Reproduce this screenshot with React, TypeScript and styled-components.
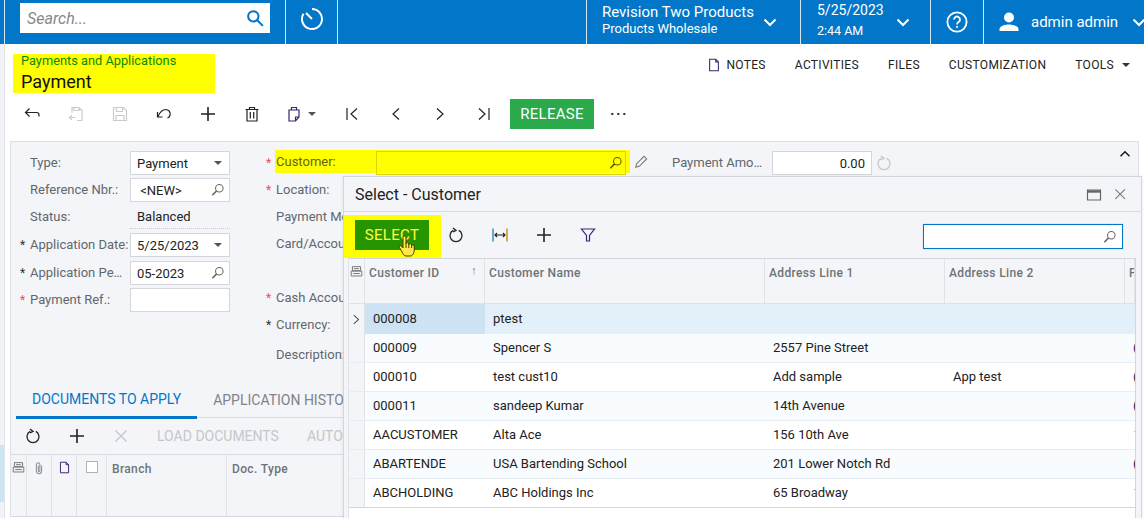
import React from 'react';
import styled, { createGlobalStyle } from 'styled-components';

const GlobalStyle = createGlobalStyle`
  html, body {
    margin: 0;
    padding: 0;
    background: #fff;
    font-family: Roboto, "Liberation Sans", sans-serif;
    font-size: 13px;
    color: #222;
  }
  * { box-sizing: border-box; }
`;

const BLUE = '#0277c9';
const YELLOW = '#ffff00';

const Page = styled.div`
  position: relative;
  width: 1144px;
  height: 518px;
  overflow: hidden;
  background: #fff;
`;

/* top bar */
const TopBar = styled.header`
  display: flex;
  height: 44px;
  background: ${BLUE};
  color: #fff;
`;

const TopCell = styled.div<{ $w?: number; $pl?: number; $last?: boolean }>`
  display: flex;
  align-items: center;
  flex: ${(p) => (p.$w ? `0 0 ${p.$w}px` : '1 1 auto')};
  min-width: 0;
  padding-left: ${(p) => p.$pl ?? 0}px;
  border-right: ${(p) => (p.$last ? 'none' : '1px solid #d7e8f5')};
`;

const SearchBox = styled.div`
  display: flex;
  align-items: center;
  justify-content: space-between;
  align-self: flex-start;
  width: 250px;
  height: 30px;
  margin-top: 3px;
  padding: 0 6px 0 7px;
  background: #fff;
  color: #85888c;
  font-size: 16px;
  font-style: italic;
`;

const ClockBox = styled.span`
  display: flex;
  margin-top: -6px;
`;

const TwoLines = styled.div<{ $w: number; $up: number }>`
  flex: 0 0 ${(p) => p.$w}px;
  margin-top: -${(p) => p.$up}px;
  white-space: nowrap;
`;

const MainLine = styled.div<{ $size: number }>`
  font-size: ${(p) => p.$size}px;
  line-height: 17px;
`;

const SubLine = styled.div<{ $gap: number; $size: number }>`
  margin-top: ${(p) => p.$gap}px;
  font-size: ${(p) => p.$size}px;
  line-height: 15px;
`;

const UserName = styled.span`
  margin: 0 13px 0 11px;
  font-size: 15px;
  white-space: nowrap;
`;

/* body */
const Body = styled.div`
  display: flex;
  height: 474px;
`;

const Rail = styled.div`
  flex: 0 0 5px;
  padding-top: 401px;
  background: #f1f3f6;
  border-right: 1px solid #dfe2e6;
`;

const RailMark = styled.div`
  width: 4px;
  height: 57px;
  background: #cde4f5;
`;

const Main = styled.main`
  flex: 1;
  display: flex;
  flex-direction: column;
  min-width: 0;
`;

const HeadRow = styled.div`
  display: flex;
  justify-content: space-between;
  height: 55px;
  padding: 10px 14px 0 8px;
`;

const TitleBlock = styled.div`
  width: 202px;
  height: 39px;
  padding: 0 8px;
  background: ${YELLOW};
`;

const Crumb = styled.div`
  font-size: 12.8px;
  line-height: 14px;
  color: #0a8a00;
`;

const PageTitle = styled.div`
  margin-top: 3px;
  font-size: 18px;
  line-height: 22px;
  color: #111;
`;

const LinkBar = styled.nav`
  display: flex;
  align-items: flex-start;
  gap: 29px;
  margin-top: 1px;
`;

const TopLink = styled.span`
  display: inline-flex;
  align-items: center;
  gap: 5px;
  font-size: 12px;
  line-height: 20px;
  letter-spacing: 0.32px;
  color: #222;
`;

const ToolBar = styled.div`
  display: flex;
  align-items: center;
  height: 30px;
  margin-left: 5px;
`;

const ToolBtn = styled.span<{ $w?: number }>`
  display: inline-flex;
  align-items: center;
  justify-content: center;
  gap: 6px;
  width: ${(p) => p.$w ?? 44}px;
  height: 30px;
`;

const ReleaseBtn = styled.span`
  display: inline-flex;
  align-items: center;
  justify-content: center;
  width: 84px;
  height: 30px;
  margin-left: 4px;
  background: #2aaa4a;
  color: #fff;
  font-size: 15px;
  letter-spacing: 0.3px;
`;

const Dots = styled.span`
  margin-left: 16px;
  font-size: 15px;
  line-height: 28px;
  letter-spacing: 1.5px;
  font-weight: 700;
  color: #333;
`;

/* form */
const Panel = styled.section`
  flex: 0 0 376px;
  display: flex;
  flex-direction: column;
  margin: 12px 5px 0 5px;
  background: #f4f5f8;
  border: 1px solid #dcdfe3;
  border-bottom: 1px solid #d5d8dc;
`;

const Form = styled.div`
  position: relative;
  display: flex;
  height: 239px;
  padding: 8px 0 0 9px;
`;

const FormCol = styled.div<{ $w: number }>`
  flex: 0 0 ${(p) => p.$w}px;
`;

const FormRow = styled.div<{ $h?: number }>`
  display: flex;
  align-items: flex-start;
  height: ${(p) => p.$h ?? 27}px;
`;

const Star = styled.span<{ $red?: boolean }>`
  flex: 0 0 10px;
  font-size: 12px;
  line-height: 26px;
  color: ${(p) => (p.$red ? '#e8505b' : '#333')};
`;

const Label = styled.span<{ $w?: number }>`
  flex: 0 0 ${(p) => p.$w ?? 100}px;
  margin-right: ${(p) => 100 - (p.$w ?? 100)}px;
  overflow: hidden;
  white-space: nowrap;
  text-overflow: ellipsis;
  line-height: 25px;
  color: #5f676e;
`;

const Field = styled.div<{ $w?: number; $right?: boolean }>`
  display: flex;
  align-items: center;
  justify-content: ${(p) => (p.$right ? 'flex-end' : 'space-between')};
  width: ${(p) => p.$w ?? 100}px;
  height: 24px;
  margin-top: 1px;
  padding: 0 ${(p) => (p.$right ? 6 : 4)}px 0 6px;
  background: #fff;
  border: 1px solid #d3d6da;
  color: #222;
`;

const Caret = styled.span`
  width: 0;
  height: 0;
  margin-right: 3px;
  border-left: 4px solid transparent;
  border-right: 4px solid transparent;
  border-top: 4px solid #555;
`;

const LinkCaret = styled(Caret)`
  margin-left: 3px;
  margin-right: 0;
  border-top-color: #333;
`;

const StatusText = styled.div`
  width: 100px;
  height: 24px;
  margin-top: 1px;
  padding-left: 7px;
  line-height: 23px;
  border-bottom: 1px dotted #ccc;
  color: #222;
`;

const Highlight = styled.div`
  display: flex;
  align-items: flex-start;
  flex: 0 0 355px;
  width: 355px;
  height: 23px;
  margin-left: -1px;
  padding-left: 1px;
  background: ${YELLOW};
  margin-right: 4px;
`;

const CustomerField = styled(Field)`
  background: transparent;
  border-color: #d6d600;
  justify-content: flex-end;
  padding: 0 2px;
  width: 250px;
`;

const HighlightLabel = styled(Label)`
  color: #66660a;
  line-height: 24px;
`;

const SideIcon = styled.span<{ $ml?: number }>`
  display: inline-flex;
  margin-top: 5px;
  margin-left: ${(p) => p.$ml ?? 0}px;
`;

const Collapse = styled.span`
  position: absolute;
  top: 6px;
  right: 7px;
`;

const TabStrip = styled.div`
  display: flex;
  height: 37px;
  margin-left: 5px;
  border-bottom: 1px solid #d8dbdf;
`;

const Tab = styled.span<{ $active?: boolean }>`
  display: flex;
  align-items: center;
  height: ${(p) => (p.$active ? 38 : 37)}px;
  padding: 0 16px;
  font-size: 14px;
  color: ${(p) => (p.$active ? BLUE : '#7d848a')};
  border-bottom: ${(p) => (p.$active ? `3px solid ${BLUE}` : 'none')};
  white-space: nowrap;
`;

const GridTools = styled.div`
  display: flex;
  align-items: center;
  height: 37px;
  border-bottom: 1px solid #d8dbdf;
  white-space: nowrap;
  overflow: hidden;
`;

const GhostAction = styled.span<{ $ml?: number }>`
  margin-left: ${(p) => p.$ml ?? 0}px;
  font-size: 14px;
  color: #c3c7cb;
`;

const DocHead = styled.div`
  flex: 1;
  display: grid;
  grid-template-columns: 16px 25px 25px 30px 120px 1fr;
`;

const HeadCell = styled.div<{ $center?: boolean }>`
  display: flex;
  justify-content: ${(p) => (p.$center ? 'center' : 'flex-start')};
  padding: ${(p) => (p.$center ? '6px 0 0' : '6px 5px 0')};
  overflow: hidden;
  white-space: nowrap;
  border-right: 1px solid #e0e3e6;
  font-size: 12px;
  line-height: 16px;
  font-weight: 500;
  letter-spacing: 0.35px;
  color: #6c7479;
`;

const CheckBox = styled.span`
  width: 12px;
  height: 12px;
  background: #fff;
  border: 1px solid #aeb3b8;
`;

/* dialog */
const Dialog = styled.div`
  position: absolute;
  left: 343px;
  top: 176px;
  width: 799px;
  height: 360px;
  background: #f4f5f8;
  border: 1px solid #d3d6da;
  box-shadow: 0 1px 4px rgba(0, 0, 0, 0.08);
`;

const DialogHead = styled.div`
  display: flex;
  align-items: center;
  justify-content: space-between;
  height: 35px;
  padding: 1px 13px 0 11px;
  border-bottom: 1px solid #d8dbdf;
  font-size: 16px;
  color: #222;
`;

const HeadIcons = styled.div`
  display: flex;
  align-items: center;
  gap: 12px;
`;

const DialogTools = styled.div`
  display: flex;
  align-items: flex-start;
  height: 46px;
`;

const SelectHighlight = styled.div`
  flex: 0 0 97px;
  height: 43px;
  margin-top: 3px;
  padding: 5px 0 0 11px;
  background: ${YELLOW};
`;

const SelectBtn = styled.div`
  position: relative;
  display: flex;
  align-items: center;
  justify-content: center;
  width: 74px;
  height: 30px;
  background: #279500;
  color: #ffff3c;
  font-size: 15px;
  letter-spacing: 0.3px;
`;

const Cursor = styled.span`
  position: absolute;
  left: 43px;
  top: 15px;
  display: flex;
`;

const DialogBtn = styled.span`
  display: flex;
  align-items: center;
  justify-content: center;
  width: 44px;
  height: 30px;
  margin-top: 8px;
`;

const FirstDialogBtn = styled(DialogBtn)`
  margin-left: -7px;
`;

const DialogSearch = styled.div`
  display: flex;
  align-items: center;
  justify-content: flex-end;
  width: 200px;
  height: 25px;
  margin: 12px 18px 0 auto;
  padding-right: 5px;
  background: #fff;
  border: 1px solid ${BLUE};
  box-shadow: 0 0 1px rgba(2, 119, 201, 0.5);
`;

const CustGrid = styled.div`
  width: 788px;
  height: 280px;
  margin-left: 4px;
  background: #fff;
  border-top: 1px solid #d3d6da;
  border-left: 1px solid #dfe3e6;
  border-right: 1px solid #d3d6da;
  font-size: 13px;
`;

const COLUMNS = '16px 120px 280px 180px 180px 1fr';

const CustHead = styled.div`
  display: grid;
  grid-template-columns: ${COLUMNS};
  height: 45px;
  background: #f4f5f8;
  border-bottom: 1px solid #dde2e6;
`;

const CustHeadCell = styled(HeadCell)`
  padding-left: 4px;
`;

const SortCell = styled(CustHeadCell)`
  justify-content: space-between;
`;

const SortArrow = styled.span`
  margin: -2px 2px 0 0;
  font-size: 11px;
  color: #7a8288;
`;

const CustRow = styled.div<{ $sel?: boolean; $odd?: boolean; $h: number }>`
  display: grid;
  grid-template-columns: ${COLUMNS};
  height: ${(p) => p.$h}px;
  background: ${(p) => (p.$sel ? '#e4f0f9' : p.$odd ? '#f8fcff' : '#fff')};
  border-bottom: ${(p) => (p.$sel ? 'none' : '1px solid #e6eef4')};
  line-height: ${(p) => p.$h - 1 + (p.$sel ? 1 : 0)}px;
  color: #222;

  &:last-child {
    border-bottom-color: #d3d6da;
  }
`;

const RowGutter = styled.div`
  display: flex;
  align-items: center;
  background: #f4f5f8;
  border-right: 1px solid #dfe3e6;
  padding-left: 2px;
`;

const Cell = styled.div<{ $sel?: boolean; $tint?: string }>`
  padding-left: 8px;
  overflow: hidden;
  white-space: nowrap;
  background: ${(p) => (p.$sel ? '#cde3f4' : 'transparent')};
  color: ${(p) => p.$tint ?? '#222'};
`;

/* icons */
const Svg: React.FC<{ s?: number; c?: string; sw?: number; children: React.ReactNode }> = ({
  s = 16,
  c = '#222',
  sw = 1.2,
  children,
}) => (
  <svg
    width={s}
    height={s}
    viewBox="0 0 16 16"
    fill="none"
    stroke={c}
    strokeWidth={sw}
    style={{ display: 'block', flex: 'none' }}
  >
    {children}
  </svg>
);

const Chevron: React.FC = () => (
  <Svg s={16} c="#fff" sw={2}>
    <path d="M2.5 5.5L8 11l5.5-5.5" />
  </Svg>
);

const Magnifier: React.FC<{ c?: string; s?: number }> = ({ c = '#666', s = 14 }) => (
  <Svg s={s} c={c}>
    <circle cx="9.5" cy="6" r="4.3" />
    <path d="M6.4 9L1.5 14" strokeWidth="1.7" />
  </Svg>
);

const Refresh: React.FC<{ c?: string }> = ({ c = '#222' }) => (
  <Svg s={16} c={c} sw={1.3}>
    <path d="M5.2 3.4a6 6 0 1 0 5.6 0" />
    <path d="M5 1L8 3.4 5 4.8" />
  </Svg>
);

const Plus: React.FC = () => (
  <Svg s={16} c="#222" sw={1.6}>
    <path d="M8 1v14M1 8h14" />
  </Svg>
);

const NoteIcon: React.FC<{ s?: number }> = ({ s = 14 }) => (
  <Svg s={s} c="#3d2470">
    <path d="M3 1.5h7l3 3v10H3zM10 1.5v3h3" />
  </Svg>
);

const GridConfig: React.FC = () => (
  <Svg s={13} c="#777" sw={1.2}>
    <path d="M3 2h10v5H3zM1.5 7.5h13v6h-13zM5 4.5h6M4 10.5h8" />
  </Svg>
);

const HandCursor: React.FC = () => (
  <svg width="17" height="22" viewBox="0 0 17 22" fill="#ffe94a" stroke="#4a4000" strokeWidth="1">
    <path d="M5 13V2.5a1.5 1.5 0 0 1 3 0V9a1.4 1.4 0 0 1 2.8 0v1a1.4 1.4 0 0 1 2.8 0v1a1.3 1.3 0 0 1 2.6 0v4c0 3-1.5 6-4 6H8c-2 0-3-2-4-4l-2.5-4.5c-.8-1.2.8-2.4 1.8-1.4z" />
    <path d="M8 9v4M10.8 10v3M13.6 11v2" fill="none" />
  </svg>
);

const App: React.FC = () => {
  const rows = [
    ['000008', 'ptest', '', '', ''],
    ['000009', 'Spencer S', '2557 Pine Street', '', '('],
    ['000010', 'test cust10', 'Add sample', 'App test', '('],
    ['000011', 'sandeep Kumar', '14th Avenue', '', '('],
    ['AACUSTOMER', 'Alta Ace', '156 10th Ave', '', '1'],
    ['ABARTENDE', 'USA Bartending School', '201 Lower Notch Rd', '', '('],
    ['ABCHOLDING', 'ABC Holdings Inc', '65 Broadway', '', '1'],
  ];

  return (
    <Page>
      <GlobalStyle />
      <TopBar>
        <TopCell $w={5} />
        <TopCell $w={281} $pl={15}>
          <SearchBox>
            Search...
            <Svg s={18} c={BLUE} sw={1.8}>
              <circle cx="6.5" cy="6.5" r="4.6" />
              <path d="M10 10l5 5" />
            </Svg>
          </SearchBox>
        </TopCell>
        <TopCell $w={52} $pl={14}>
          <ClockBox>
            <svg width="24" height="24" viewBox="0 0 24 24" fill="none" stroke="#fff" strokeWidth="2">
              <path d="M12 2A10 10 0 1 1 3.5 6.7" />
              <path d="M12 12L6 6" />
            </svg>
          </ClockBox>
        </TopCell>
        <TopCell />
        <TopCell $w={214} $pl={15}>
          <TwoLines $w={160} $up={4}>
            <MainLine $size={15}>Revision Two Products</MainLine>
            <SubLine $gap={0} $size={13}>
              Products Wholesale
            </SubLine>
          </TwoLines>
          <Chevron />
        </TopCell>
        <TopCell $w={130} $pl={16}>
          <TwoLines $w={78} $up={5}>
            <MainLine $size={14}>5/25/2023</MainLine>
            <SubLine $gap={4} $size={12.5}>
              2:44 AM
            </SubLine>
          </TwoLines>
          <Chevron />
        </TopCell>
        <TopCell $w={53} $pl={15}>
          <svg width="22" height="22" viewBox="0 0 22 22" fill="none" stroke="#fff" strokeWidth="1.8">
            <circle cx="11" cy="11" r="9.6" />
            <path d="M8 8.6a3 3 0 1 1 4.6 2.5c-1 .7-1.6 1.2-1.6 2.4" />
            <path d="M11 15v1.8" />
          </svg>
        </TopCell>
        <TopCell $w={160} $pl={14} $last>
          <svg width="22" height="22" viewBox="0 0 22 22" fill="#fff" style={{ flex: 'none' }}>
            <circle cx="11" cy="6.5" r="5" />
            <path d="M1.5 20v-2c0-3.2 6-4.6 9.5-4.6s9.5 1.4 9.5 4.6v2z" />
          </svg>
          <UserName>admin admin</UserName>
          <Chevron />
        </TopCell>
      </TopBar>

      <Body>
        <Rail>
          <RailMark />
        </Rail>
        <Main>
          <HeadRow>
            <TitleBlock>
              <Crumb>Payments and Applications</Crumb>
              <PageTitle>Payment</PageTitle>
            </TitleBlock>
            <LinkBar>
              <TopLink>
                <NoteIcon />
                NOTES
              </TopLink>
              <TopLink>ACTIVITIES</TopLink>
              <TopLink>FILES</TopLink>
              <TopLink>CUSTOMIZATION</TopLink>
              <TopLink>
                TOOLS
                <LinkCaret />
              </TopLink>
            </LinkBar>
          </HeadRow>

          <ToolBar>
            <ToolBtn>
              <Svg>
                <path d="M1.5 6.5h11a2.5 2.5 0 0 1 2.5 2.5v1.5M5.5 2.5l-4 4 4 4" />
              </Svg>
            </ToolBtn>
            <ToolBtn>
              <Svg c="#c9cccf">
                <path d="M4 7V1.5h7l3 3v10H9M6 1.5v3h5v-3M1.5 11.5h6M4 9l-2.5 2.5L4 14" />
              </Svg>
            </ToolBtn>
            <ToolBtn>
              <Svg c="#c9cccf">
                <path d="M1.5 1.5h10l3 3v10h-13zM4.5 1.5v4h6v-4M4 14.5v-5h8v5" />
              </Svg>
            </ToolBtn>
            <ToolBtn>
              <Svg>
                <path d="M1.5 6v5h5M2 10.5C4 6 6 3.5 9.5 3.5c3.5 0 5.5 3 4.5 6-.4 1.2-1.3 2-2.5 2.5" />
              </Svg>
            </ToolBtn>
            <ToolBtn>
              <Plus />
            </ToolBtn>
            <ToolBtn>
              <Svg>
                <path d="M1.5 3.5h13M5.5 3.5V1.5h5v2M3 3.5v11.5h10V3.5M6.3 6v6.5M9.7 6v6.5" />
              </Svg>
            </ToolBtn>
            <ToolBtn $w={56}>
              <Svg c="#3d2470">
                <path d="M3 4h10v7l-3.5 4H3zM5.5 4V1.5h5V4M9.5 15v-4H13" />
              </Svg>
              <Caret />
            </ToolBtn>
            <ToolBtn>
              <Svg>
                <path d="M3 2v12M13 2.5L7 8l6 5.5" />
              </Svg>
            </ToolBtn>
            <ToolBtn>
              <Svg>
                <path d="M11 2.5L5 8l6 5.5" />
              </Svg>
            </ToolBtn>
            <ToolBtn>
              <Svg>
                <path d="M5 2.5L11 8l-6 5.5" />
              </Svg>
            </ToolBtn>
            <ToolBtn>
              <Svg>
                <path d="M13 2v12M3 2.5L9 8l-6 5.5" />
              </Svg>
            </ToolBtn>
            <ReleaseBtn>RELEASE</ReleaseBtn>
            <Dots>···</Dots>
          </ToolBar>

          <Panel>
            <Form>
              <FormCol $w={246}>
                <FormRow>
                  <Star />
                  <Label>Type:</Label>
                  <Field>
                    Payment
                    <Caret />
                  </Field>
                </FormRow>
                <FormRow>
                  <Star />
                  <Label>Reference Nbr.:</Label>
                  <Field>
                    &nbsp;&lt;NEW&gt;
                    <Magnifier />
                  </Field>
                </FormRow>
                <FormRow $h={28}>
                  <Star />
                  <Label>Status:</Label>
                  <StatusText>Balanced</StatusText>
                </FormRow>
                <FormRow $h={28}>
                  <Star>*</Star>
                  <Label>Application Date:</Label>
                  <Field>
                    5/25/2023
                    <Caret />
                  </Field>
                </FormRow>
                <FormRow>
                  <Star>*</Star>
                  <Label $w={95}>Application Period:</Label>
                  <Field>
                    05-2023
                    <Magnifier />
                  </Field>
                </FormRow>
                <FormRow>
                  <Star $red>*</Star>
                  <Label>Payment Ref.:</Label>
                  <Field />
                </FormRow>
              </FormCol>

              <FormCol $w={406}>
                <FormRow>
                  <Star $red>*</Star>
                  <Highlight>
                    <HighlightLabel>Customer:</HighlightLabel>
                    <CustomerField>
                      <Magnifier c="#55550a" />
                    </CustomerField>
                  </Highlight>
                  <SideIcon>
                    <Svg s={14} c="#777">
                      <path d="M2 14l1-4L11.5 1.5l3 3L6 13z" />
                    </Svg>
                  </SideIcon>
                </FormRow>
                <FormRow>
                  <Star $red>*</Star>
                  <Label>Location:</Label>
                </FormRow>
                <FormRow>
                  <Star />
                  <Label>Payment Method:</Label>
                </FormRow>
                <FormRow>
                  <Star />
                  <Label>Card/Account Nbr.:</Label>
                </FormRow>
                <FormRow />
                <FormRow>
                  <Star $red>*</Star>
                  <Label>Cash Account:</Label>
                </FormRow>
                <FormRow $h={30}>
                  <Star>*</Star>
                  <Label>Currency:</Label>
                </FormRow>
                <FormRow>
                  <Star />
                  <Label>Description:</Label>
                </FormRow>
              </FormCol>

              <FormCol $w={230}>
                <FormRow>
                  <Label $w={94}>Payment Amount:</Label>
                  <Field $w={100} $right>
                    0.00
                  </Field>
                  <SideIcon $ml={4}>
                    <Refresh c="#c5c8cb" />
                  </SideIcon>
                </FormRow>
              </FormCol>

              <Collapse>
                <Svg s={12} c="#111" sw={1.8}>
                  <path d="M2 11l6-6 6 6" />
                </Svg>
              </Collapse>
            </Form>

            <TabStrip>
              <Tab $active>DOCUMENTS TO APPLY</Tab>
              <Tab>APPLICATION HISTORY</Tab>
            </TabStrip>

            <GridTools>
              <ToolBtn>
                <Refresh />
              </ToolBtn>
              <ToolBtn>
                <Plus />
              </ToolBtn>
              <ToolBtn>
                <Svg c="#c3c7cb">
                  <path d="M2.5 2.5l11 11M13.5 2.5l-11 11" />
                </Svg>
              </ToolBtn>
              <GhostAction $ml={14}>LOAD DOCUMENTS</GhostAction>
              <GhostAction $ml={28}>AUTO APPLY</GhostAction>
            </GridTools>

            <DocHead>
              <HeadCell $center>
                <GridConfig />
              </HeadCell>
              <HeadCell $center>
                <Svg s={14} c="#8a8f96">
                  <path d="M11 5v6.5a3 3 0 0 1-6 0V4a2 2 0 0 1 4 0v7a.9.9 0 0 1-1.8 0V5" />
                </Svg>
              </HeadCell>
              <HeadCell $center>
                <NoteIcon s={13} />
              </HeadCell>
              <HeadCell $center>
                <CheckBox />
              </HeadCell>
              <HeadCell>Branch</HeadCell>
              <HeadCell>Doc. Type</HeadCell>
            </DocHead>
          </Panel>
        </Main>
      </Body>

      <Dialog>
        <DialogHead>
          Select - Customer
          <HeadIcons>
            <Svg s={16} c="#666">
              <path d="M1.5 3h13v10h-13z" />
              <path d="M1.5 4.5h13" strokeWidth="2.4" />
            </Svg>
            <Svg s={14} c="#777">
              <path d="M1.5 1.5l11 11M12.5 1.5l-11 11" />
            </Svg>
          </HeadIcons>
        </DialogHead>
        <DialogTools>
          <SelectHighlight>
            <SelectBtn>
              SELECT
              <Cursor>
                <HandCursor />
              </Cursor>
            </SelectBtn>
          </SelectHighlight>
          <FirstDialogBtn>
            <Refresh />
          </FirstDialogBtn>
          <DialogBtn>
            <Svg>
              <path d="M1 1.5v13" stroke="#1a7fc0" strokeWidth="1.3" />
              <path d="M15 1.5v13" stroke="#c98000" strokeWidth="1.3" />
              <path d="M3 8h10M5 6L3 8l2 2M11 6l2 2-2 2" />
            </Svg>
          </DialogBtn>
          <DialogBtn>
            <Plus />
          </DialogBtn>
          <DialogBtn>
            <Svg c="#3d2470">
              <path d="M1.5 2h13L9.5 8.5V14h-3V8.5z" />
            </Svg>
          </DialogBtn>
          <DialogSearch>
            <Magnifier />
          </DialogSearch>
        </DialogTools>
        <CustGrid>
          <CustHead>
            <HeadCell $center>
              <GridConfig />
            </HeadCell>
            <SortCell>
              Customer ID
              <SortArrow>↑</SortArrow>
            </SortCell>
            <CustHeadCell>Customer Name</CustHeadCell>
            <CustHeadCell>Address Line 1</CustHeadCell>
            <CustHeadCell>Address Line 2</CustHeadCell>
            <CustHeadCell>Phone</CustHeadCell>
          </CustHead>
          {rows.map((r, i) => (
            <CustRow key={r[0]} $sel={i === 0} $odd={i % 2 === 1} $h={i === 0 ? 30 : 29}>
              <RowGutter>
                {i === 0 && (
                  <Svg s={11} c="#555" sw={1.5}>
                    <path d="M4 1.5L11 8l-7 6.5" />
                  </Svg>
                )}
              </RowGutter>
              <Cell $sel={i === 0}>{r[0]}</Cell>
              <Cell>{r[1]}</Cell>
              <Cell>{r[2]}</Cell>
              <Cell>{r[3]}</Cell>
              <Cell $tint={r[4] === '1' ? '#e0a090' : '#2a1a60'}>{r[4]}</Cell>
            </CustRow>
          ))}
        </CustGrid>
      </Dialog>
    </Page>
  );
};

export default App;
